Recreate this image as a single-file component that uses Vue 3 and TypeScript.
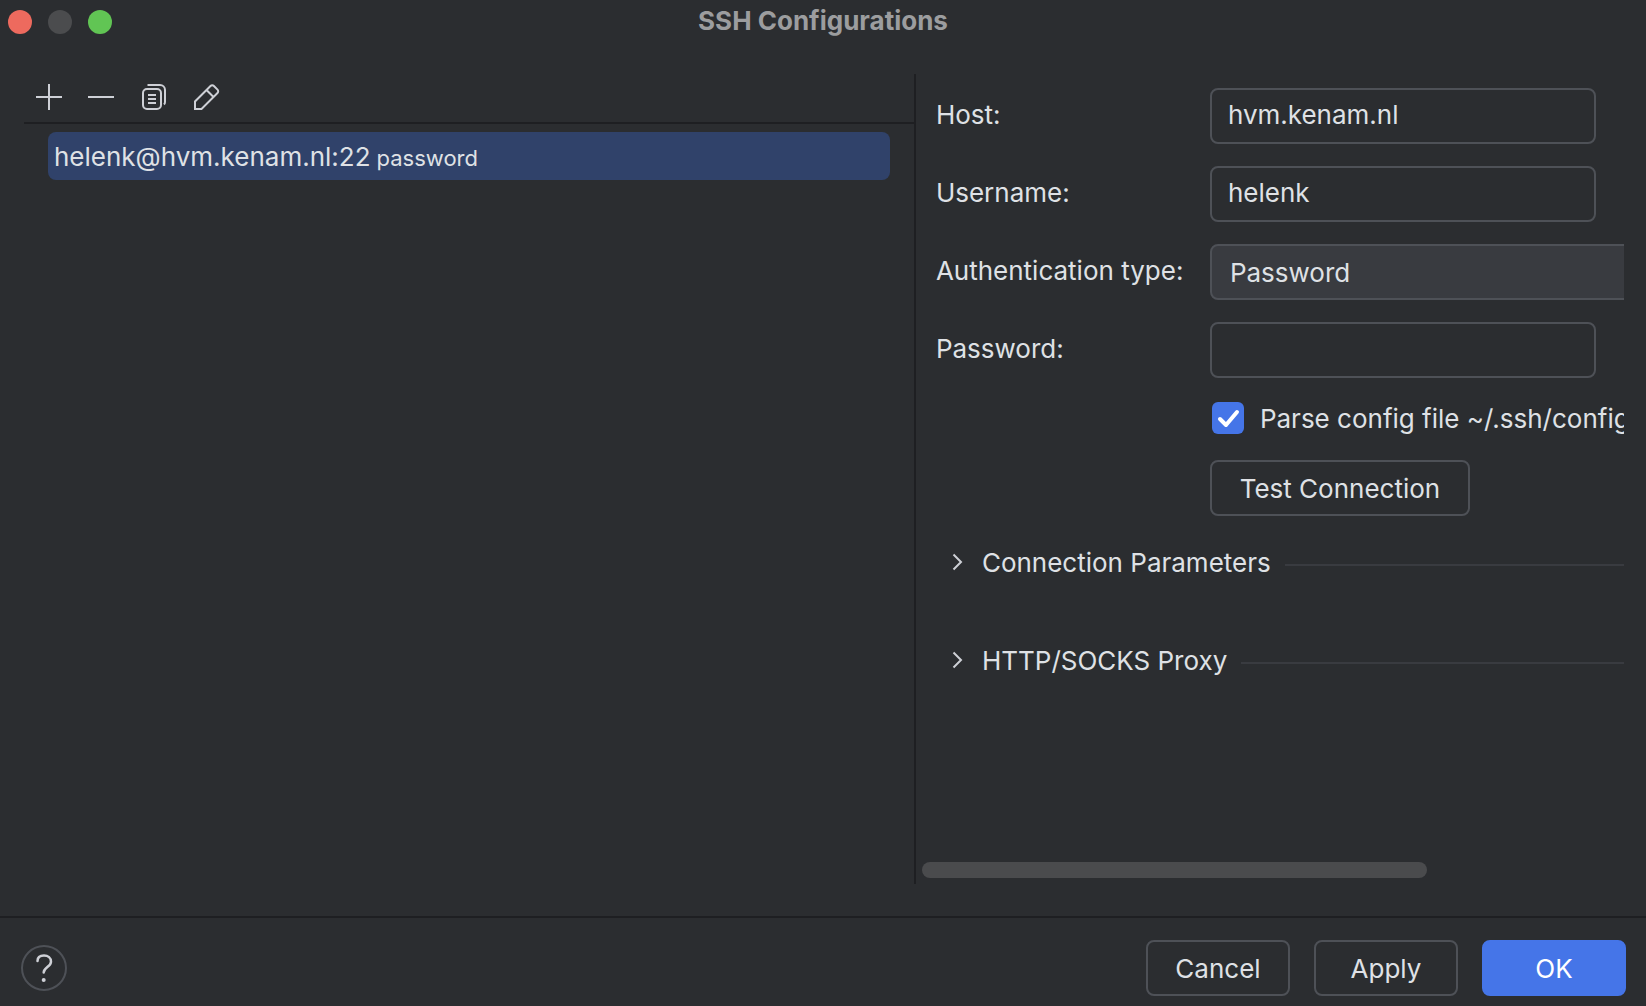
<script setup lang="ts">
import { ref } from 'vue'

interface SshConfig {
  host: string
  port: number
  user: string
  auth: string
}

const configs: SshConfig[] = [
  { host: 'hvm.kenam.nl', port: 22, user: 'helenk', auth: 'password' },
]
const selected = ref(0)

const host = ref('hvm.kenam.nl')
const username = ref('helenk')
const authType = ref('Password')
const password = ref('')
const parseConfig = ref(true)

const authTypes = ['Password', 'Key pair', 'OpenSSH config and authentication agent']
const sections = ['Connection Parameters', 'HTTP/SOCKS Proxy']
</script>

<template>
  <div class="dialog">
    <header class="titlebar">
      <div class="lights">
        <button class="light close" aria-label="Close"></button>
        <button class="light minimize" aria-label="Minimize" disabled></button>
        <button class="light zoom" aria-label="Zoom"></button>
      </div>
      <h1>SSH Configurations</h1>
    </header>

    <main class="content">
      <section class="list-pane">
        <div class="toolbar">
          <button aria-label="Add">
            <svg viewBox="0 0 32 32"><path d="M16 3v26M3 16h26" /></svg>
          </button>
          <button aria-label="Remove">
            <svg viewBox="0 0 32 32"><path d="M3 16h26" /></svg>
          </button>
          <button aria-label="Copy">
            <svg viewBox="0 0 32 32">
              <rect x="6" y="8" width="18" height="20" rx="4" />
              <path d="M10.500 4H23a5 5 0 0 1 5 5v12q0 1.500-1 2.500" />
              <path d="M11 14h8M11 18h8M11 22h8" />
            </svg>
          </button>
          <button aria-label="Edit">
            <svg viewBox="0 0 32 32">
              <path d="M6 28v-7.500L21.500 5a2.400 2.400 0 0 1 3.400 0l3.600 3.600a2.400 2.400 0 0 1 0 3.400L12.500 28zM17.500 9l7 7" />
            </svg>
          </button>
        </div>
        <ul class="configs">
          <li v-for="(c, i) in configs" :key="i">
            <button class="config" :class="{ active: i === selected }" @click="selected = i">
              <span>{{ c.user }}@{{ c.host }}:{{ c.port }}</span>
              <small>{{ c.auth }}</small>
            </button>
          </li>
        </ul>
      </section>

      <section class="detail-pane">
        <form class="form" @submit.prevent>
          <div class="row">
            <label for="host">Host:</label>
            <input id="host" v-model="host" class="field" type="text" />
          </div>
          <div class="row">
            <label for="username">Username:</label>
            <input id="username" v-model="username" class="field" type="text" />
          </div>
          <div class="row">
            <label for="auth">Authentication type:</label>
            <select id="auth" v-model="authType" class="field">
              <option v-for="t in authTypes" :key="t">{{ t }}</option>
            </select>
          </div>
          <div class="row">
            <label for="password">Password:</label>
            <input id="password" v-model="password" class="field" type="password" />
          </div>
          <div class="check">
            <input id="parse" v-model="parseConfig" type="checkbox" />
            <svg v-if="parseConfig" class="tick" viewBox="0 0 32 32">
              <path d="M8 17l6 6L25 10" />
            </svg>
            <label for="parse">Parse config file ~/.ssh/config</label>
          </div>
          <button class="btn test" type="button">Test Connection</button>
          <div v-for="s in sections" :key="s" class="section">
            <button class="expander" type="button" aria-expanded="false">
              <svg viewBox="0 0 16 24"><path d="M3.500 3.500l7.500 7.500-7.500 7.500" /></svg>
              <span>{{ s }}</span>
            </button>
            <div class="rule"></div>
          </div>
        </form>
        <div class="scrollbar"><div class="thumb"></div></div>
      </section>
    </main>

    <footer class="footer">
      <button class="help" aria-label="Help">
        <svg viewBox="0 0 42 42">
          <path d="M14.500 14C14.500 10.500 17 8.500 21 8.500s7 2.500 7 6.200c0 5-7.300 5.800-7.300 10.800" />
          <circle cx="20.700" cy="33" r="2" />
        </svg>
      </button>
      <div class="actions">
        <button class="btn">Cancel</button>
        <button class="btn">Apply</button>
        <button class="btn primary">OK</button>
      </div>
    </footer>
  </div>
</template>

<style>
body {
  background: #2b2d30;
}
</style>

<style scoped>
* {
  box-sizing: border-box;
}
.dialog {
  display: flex;
  flex-direction: column;
  min-height: 100vh;
  background: #2b2d30;
  color: #dfe1e5;
  font: 26px/34px Inter, sans-serif;
}
button,
input,
select {
  margin: 0;
  font: inherit;
  color: inherit;
}
button {
  padding: 0;
  border: 0;
  background: none;
}
svg {
  display: block;
  fill: none;
  stroke: #ced0d6;
  stroke-width: 2;
}
.titlebar {
  display: grid;
  grid-template-columns: 1fr auto 1fr;
  align-items: center;
  padding: 4px 8px 0;
  height: 40px;
}
.lights {
  display: flex;
  gap: 16px;
}
.light {
  width: 24px;
  height: 24px;
  border-radius: 50%;
}
.close {
  background: #ed6a5e;
}
.minimize {
  background: #4b4c4e;
}
.zoom {
  background: #61c554;
}
h1 {
  margin: 0;
  padding-bottom: 2px;
  color: #9c9d9f;
  font-size: 26px;
  font-weight: 700;
}
.content {
  display: flex;
  flex: 1;
  margin: 34px 22px 32px 24px;
}
.list-pane {
  flex: 891 1 0;
  min-width: 0;
}
.toolbar {
  display: flex;
  gap: 20px;
  height: 50px;
  padding: 7px 9px;
  border-bottom: 2px solid #1e1f22;
}
.toolbar button,
.toolbar svg {
  width: 32px;
  height: 32px;
}
.configs {
  margin: 0;
  padding: 8px 24px;
  list-style: none;
}
.config {
  display: flex;
  align-items: baseline;
  gap: 6px;
  width: 100%;
  height: 48px;
  padding: 8px 6px 6px;
  border-radius: 8px;
  text-align: left;
}
.config.active {
  background: #30426a;
}
.config small {
  font-size: 22px;
}
.detail-pane {
  display: flex;
  flex: 709 1 0;
  flex-direction: column;
  justify-content: space-between;
  min-width: 0;
  border-left: 2px solid #1e1f22;
}
.form {
  overflow: hidden;
  padding: 14px 0 0 20px;
}
.row {
  display: flex;
  margin-bottom: 22px;
}
.row label {
  flex: 0 0 274px;
  padding: 10px 0;
}
.field {
  flex: 0 0 386px;
  width: 386px;
  height: 56px;
  padding: 0 16px 4px;
  border: 2px solid #4e5157;
  border-radius: 8px;
  outline: 0;
  background: #2b2d30;
}
select.field {
  flex-basis: 480px;
  padding: 2px 18px 0;
  background: #393b40;
  appearance: none;
}
.check {
  display: grid;
  grid-template-columns: 32px max-content;
  align-items: start;
  gap: 16px;
  margin: 24px 0 24px 276px;
}
.check input,
.tick {
  grid-area: 1 / 1;
  width: 32px;
  height: 32px;
}
.check input {
  border: 2px solid #4e5157;
  border-radius: 6px;
  appearance: none;
}
.check input:checked {
  border: 0;
  background: #4575e8;
}
.check label {
  grid-area: 1 / 2;
}
.tick {
  stroke: #fff;
  stroke-width: 4;
  stroke-linecap: round;
  stroke-linejoin: round;
  pointer-events: none;
}
.btn {
  width: 144px;
  height: 56px;
  padding-top: 2px;
  border: 2px solid #4e5157;
  border-radius: 8px;
}
.btn.primary {
  border-color: #4575e8;
  background: #4575e8;
  color: #fff;
}
.btn.test {
  display: block;
  width: 260px;
  margin: 0 0 30px 274px;
}
.section {
  display: flex;
  align-items: center;
  gap: 14px;
  margin-bottom: 64px;
  padding-left: 14px;
}
.section:last-child {
  margin-bottom: 0;
}
.expander {
  display: flex;
  align-items: center;
  gap: 16px;
}
.expander svg {
  width: 16px;
  height: 24px;
}
.rule {
  flex: 1;
  height: 2px;
  margin-top: 4px;
  background: #393b40;
}
.scrollbar {
  margin: 0 0 6px 6px;
}
.thumb {
  width: 72%;
  height: 16px;
  border-radius: 8px;
  background: #4a4b4d;
}
.footer {
  display: flex;
  align-items: center;
  justify-content: space-between;
  padding: 22px 20px 10px;
  border-top: 2px solid #1e1f22;
}
.help {
  width: 46px;
  height: 46px;
  margin-left: 1px;
  border: 2px solid #4e5157;
  border-radius: 50%;
}
.help svg {
  width: 42px;
  height: 42px;
}
.help path {
  stroke-width: 2.5;
  stroke-linecap: round;
}
.help circle {
  fill: #ced0d6;
  stroke: none;
}
.actions {
  display: flex;
  gap: 24px;
}
</style>
